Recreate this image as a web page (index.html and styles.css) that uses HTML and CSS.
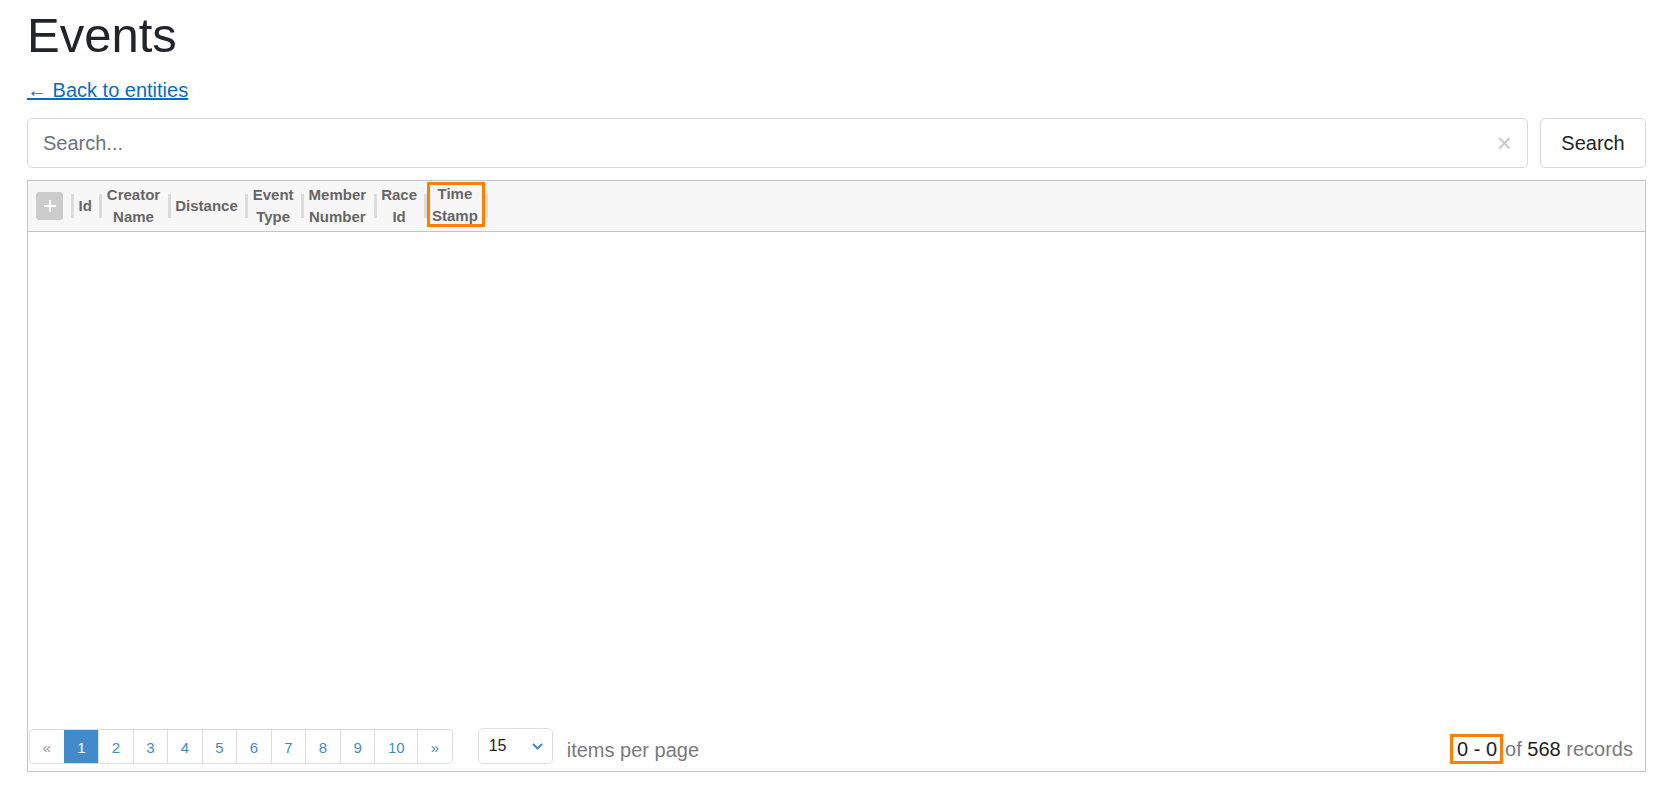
FILE: index.html
```html
<!DOCTYPE html>
<html lang="en">
<head>
<meta charset="utf-8">
<title>Events</title>
<link rel="stylesheet" href="styles.css">
</head>
<body>
<div class="page">
  <h1 class="title">Events</h1>
  <div class="back-row"><a class="back-link" href="#">← Back to entities</a></div>

  <div class="search-row">
    <div class="search-box">
      <input class="search-input" type="text" placeholder="Search...">
      <span class="search-clear">×</span>
    </div>
    <button class="search-btn" type="button">Search</button>
  </div>

  <div class="grid">
    <div class="grid-header">
      <span class="add-btn">
        <svg width="14" height="14" viewBox="0 0 14 14"><path d="M7 1v12M1 7h12" stroke="#fff" stroke-width="2" fill="none"/></svg>
      </span>
      <span class="sep"></span>
      <span class="col">Id</span>
      <span class="sep"></span>
      <span class="col">Creator<br>Name</span>
      <span class="sep"></span>
      <span class="col">Distance</span>
      <span class="sep"></span>
      <span class="col">Event<br>Type</span>
      <span class="sep"></span>
      <span class="col">Member<br>Number</span>
      <span class="sep"></span>
      <span class="col">Race<br>Id</span>
      <span class="sep"></span>
      <span class="col col-marked">Time<br>Stamp</span>
      <span class="sep"></span>
    </div>
    <div class="grid-body"></div>
    <div class="grid-footer">
      <ul class="pager">
        <li class="pg pg-edge">«</li>
        <li class="pg pg-active">1</li>
        <li class="pg">2</li>
        <li class="pg">3</li>
        <li class="pg">4</li>
        <li class="pg">5</li>
        <li class="pg">6</li>
        <li class="pg">7</li>
        <li class="pg">8</li>
        <li class="pg">9</li>
        <li class="pg">10</li>
        <li class="pg">»</li>
      </ul>
      <div class="page-size">
        <span class="page-size-val">15</span>
        <svg class="chev" width="11" height="7" viewBox="0 0 11 7"><path d="M1 1l4.5 4.5L10 1" stroke="#428bca" stroke-width="2" fill="none"/></svg>
      </div>
      <span class="per-page">items per page</span>
      <div class="summary"><span class="range">0 - 0</span><span class="muted">of</span> <span class="dark">568</span> <span class="muted">records</span></div>
    </div>
  </div>
</div>
</body>
</html>
```

FILE: styles.css
```css
* { box-sizing: border-box; }

html, body {
  margin: 0;
  padding: 0;
  background: #fff;
}

body {
  font-family: "Liberation Sans", Arial, sans-serif;
  color: #212529;
}

.page {
  padding: 0 10px 0 27px;
}

.title {
  margin: 7px 0 0 0;
  font-size: 49px;
  line-height: 56px;
  font-weight: 400;
  color: #212529;
}

.back-row {
  margin-top: 15px;
  height: 24px;
  line-height: 24px;
}

.back-link {
  font-size: 20px;
  color: #0a6bc4;
  text-decoration: underline;
}

.search-row {
  margin-top: 16px;
  display: flex;
  gap: 12px;
  height: 50px;
}

.search-box {
  flex: 1;
  position: relative;
  border: 1px solid #d9d9d9;
  border-radius: 5px;
  background: #fff;
}

.search-input {
  width: 100%;
  height: 100%;
  border: 0;
  outline: none;
  background: transparent;
  padding: 0 40px 0 15px;
  font-family: "Liberation Sans", Arial, sans-serif;
  font-size: 20px;
  color: #212529;
}

.search-input::placeholder {
  color: #6c757d;
}

.search-clear {
  position: absolute;
  right: 15px;
  top: 50%;
  transform: translateY(-50%);
  font-size: 26px;
  line-height: 26px;
  color: #c8c8c8;
}

.search-btn {
  width: 106px;
  height: 50px;
  border: 1px solid #d9d9d9;
  border-radius: 5px;
  background: #fff;
  font-family: "Liberation Sans", Arial, sans-serif;
  font-size: 20px;
  color: #212529;
  padding: 0;
}

.grid {
  margin-top: 12px;
  height: 592px;
  border: 1px solid #c3c4cb;
  display: flex;
  flex-direction: column;
}

.grid-header {
  height: 51px;
  flex: none;
  background: #f7f7f7;
  border-bottom: 1px solid #c3c4cb;
  display: flex;
  align-items: center;
  padding-left: 8px;
}

.add-btn {
  width: 27px;
  height: 28px;
  border-radius: 3px;
  background: #cccccc;
  display: flex;
  align-items: center;
  justify-content: center;
  margin-right: 8px;
}

.sep {
  width: 3px;
  height: 24px;
  background: #dcdcdc;
  flex: none;
}

.col {
  padding: 0 7.5px 0 4.5px;
  font-size: 15px;
  font-weight: 700;
  line-height: 22px;
  color: #666;
  text-align: center;
  white-space: nowrap;
}

.col-marked {
  height: 45px;
  display: flex;
  align-items: center;
  justify-content: center;
  box-shadow: inset 0 0 0 3px #ff7f00;
  margin-top: -3px;
}

.grid-body {
  flex: 1;
  background: #fff;
}

.grid-footer {
  flex: none;
  height: 43px;
  padding: 0 12px 7px 1px;
  display: flex;
  align-items: center;
}

.pager {
  list-style: none;
  margin: 0;
  padding: 0;
  display: flex;
  border: 1px solid #dddddd;
  border-radius: 4px;
  height: 35px;
  overflow: hidden;
}

.pg {
  padding: 1px 12.6px 0;
  line-height: 33px;
  font-size: 15px;
  color: #428bca;
  border-left: 1px solid #dddddd;
}

.pg:first-child {
  border-left: 0;
}

.pg-edge {
  color: #999;
}

.pg-active {
  background: #428bca;
  color: #fff;
  border-left-color: #428bca;
}

.page-size {
  margin-left: 25px;
  width: 75px;
  height: 36px;
  border: 1px solid #dddddd;
  border-radius: 5px;
  display: flex;
  align-items: center;
  justify-content: space-between;
  padding: 0 9px 0 10px;
}

.page-size-val {
  font-size: 16px;
  color: #222;
}

.per-page {
  margin-left: 14px;
  margin-top: 7px;
  font-size: 20px;
  line-height: 24px;
  color: #7a7a7a;
}

.summary {
  margin-left: auto;
  margin-top: 5px;
  font-size: 20px;
  line-height: 30px;
  height: 30px;
  white-space: nowrap;
}

.range {
  display: inline-block;
  vertical-align: top;
  height: 30px;
  line-height: 24px;
  padding: 0 3px 0 4px;
  border: 3px solid #ff7f00;
  color: #222;
  margin-right: 2px;
}

.muted {
  color: #7a7a7a;
}

.dark {
  color: #222;
}
```
